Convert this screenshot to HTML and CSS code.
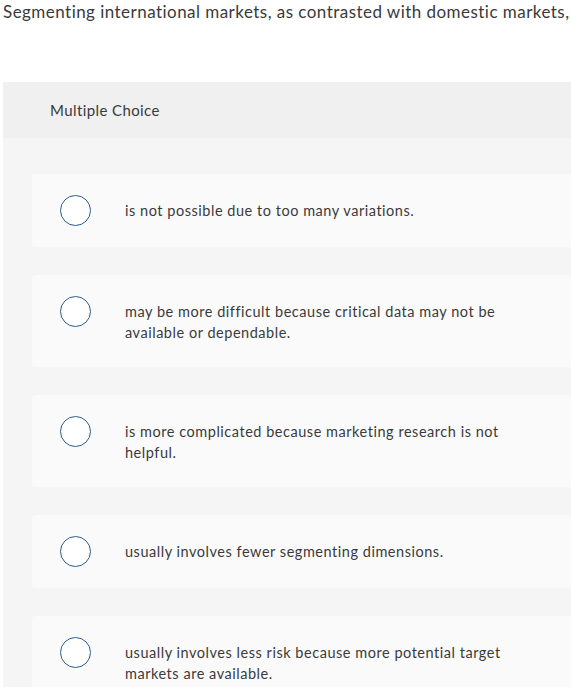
FILE: index.html
```html
<!DOCTYPE html>
<html lang="en">
<head>
<meta charset="utf-8">
<title>Multiple Choice</title>
<link rel="stylesheet" href="styles.css">
</head>
<body>
<p class="prompt">Segmenting international markets, as contrasted with domestic markets,</p>
<section class="question">
  <header class="question-head">Multiple Choice</header>
  <div class="options">
    <label class="option">
      <span class="radio"></span>
      <span class="option-text">is not possible due to too many variations.</span>
    </label>
    <label class="option">
      <span class="radio"></span>
      <span class="option-text">may be more difficult because critical data may not be available or dependable.</span>
    </label>
    <label class="option">
      <span class="radio"></span>
      <span class="option-text">is more complicated because marketing research is not helpful.</span>
    </label>
    <label class="option">
      <span class="radio"></span>
      <span class="option-text">usually involves fewer segmenting dimensions.</span>
    </label>
    <label class="option">
      <span class="radio"></span>
      <span class="option-text">usually involves less risk because more potential target markets are available.</span>
    </label>
  </div>
</section>
</body>
</html>
```

FILE: styles.css
```css
html, body {
  margin: 0;
  padding: 0;
  background: #ffffff;
  overflow: hidden;
}

body {
  font-family: Lato, "Open Sans", sans-serif;
  color: #333333;
  width: 571px;
}

.prompt {
  margin: 0;
  padding: 0 0 0 3px;
  font-size: 17px;
  line-height: 24px;
  letter-spacing: 0.46px;
  white-space: nowrap;
  color: #3a3a3a;
}

.question {
  margin: 58px 0 0 3px;
  background: #f5f5f5;
}

.question-head {
  background: #f0f0f0;
  height: 56px;
  padding-left: 47px;
  display: flex;
  align-items: center;
  font-size: 15px;
  letter-spacing: 0.4px;
  color: #3a3a3a;
}

.options {
  display: flex;
  flex-direction: column;
  gap: 28px;
  padding: 36px 0 40px 29px;
}

.option {
  display: flex;
  align-items: flex-start;
  background: #fafafa;
  border-radius: 4px 0 0 4px;
  padding: 21px 40px 21px 28px;
}

.radio {
  flex: none;
  width: 29px;
  height: 29px;
  border: 1.5px solid #2b5d8c;
  border-radius: 50%;
  background: #ffffff;
}

.option-text {
  margin: 5px 0 3px 34px;
  font-size: 14.5px;
  line-height: 21px;
  letter-spacing: 0.53px;
  color: #3a3a3a;
}
```
